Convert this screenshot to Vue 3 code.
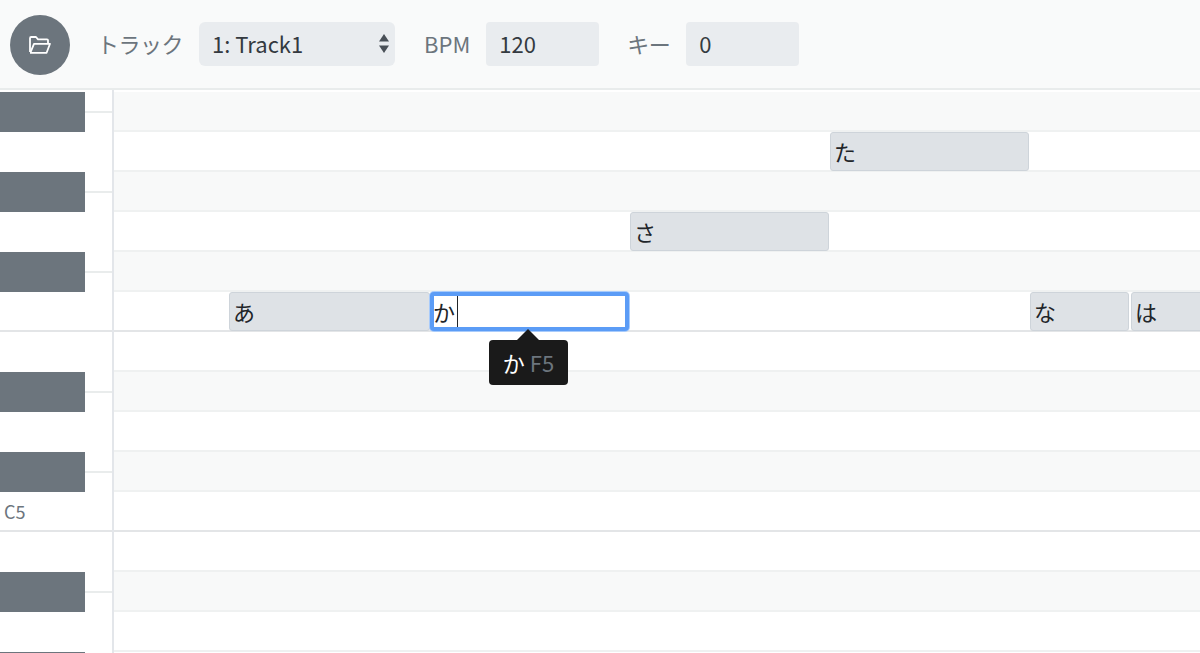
<script setup>
const rows = [1, 0, 1, 0, 1, 2, 0, 1, 0, 1, 2, 0, 1, 0]

const notes = [
  { text: 'た', row: 1, x: 716, w: 199 },
  { text: 'さ', row: 3, x: 516, w: 199 },
  { text: 'あ', row: 5, x: 115, w: 201 },
  { text: 'な', row: 5, x: 916, w: 99 },
  { text: 'は', row: 5, x: 1017, w: 100 },
]

const keys = [
  { h: 40, black: true },
  { h: 40 },
  { h: 40, black: true },
  { h: 40 },
  { h: 40, black: true },
  { h: 80, split: 40 },
  { h: 40, black: true },
  { h: 40 },
  { h: 40, black: true },
  { h: 80, split: 40, label: 'C5' },
  { h: 40, black: true },
  { h: 40 },
  { h: 40, black: true },
]

function noteStyle(note) {
  return {
    top: note.row * 40 + 2 + 'px',
    left: note.x + 'px',
    width: note.w + 'px',
  }
}
</script>

<template>
  <div class="app">
    <header class="toolbar">
      <button class="open-button" aria-label="open">
        <svg width="24" height="20" viewBox="0 0 24 20" fill="none" stroke="#fff" stroke-width="1.8" stroke-linejoin="round">
          <path d="M2 17V3.2C2 2.5 2.5 2 3.2 2H8L10 4.3H19C19.6 4.3 20 4.8 20 5.3V8.6" />
          <path d="M2 17.8H18.6L22 8.8H6L2.6 17.2" />
        </svg>
      </button>
      <label class="label track-label">トラック</label>
      <div class="select-wrap">
        <select class="field select">
          <option>1: Track1</option>
        </select>
        <svg class="select-arrows" width="10" height="19" viewBox="0 0 10 19" fill="#495057">
          <path d="M5 0L10 7.5H0Z" />
          <path d="M5 19L0 11.5H10Z" />
        </svg>
      </div>
      <label class="label bpm-label">BPM</label>
      <input class="field number" value="120" />
      <label class="label key-label">キー</label>
      <input class="field number" value="0" />
    </header>

    <main class="editor">
      <div class="piano">
        <div
          v-for="(key, i) in keys"
          :key="i"
          class="key"
          :class="{ black: key.black }"
          :style="{ height: key.h + 'px' }"
        >
          <template v-if="key.black">
            <div class="black-key"></div>
            <div class="key-line"></div>
          </template>
          <template v-else-if="key.split">
            <div class="white-top" :style="{ height: key.split + 'px' }">
              <span v-if="key.label" class="key-label-text">{{ key.label }}</span>
            </div>
          </template>
        </div>
      </div>

      <div class="grid">
        <div
          v-for="(row, i) in rows"
          :key="i"
          class="row"
          :class="{ shaded: row === 1, octave: row === 2 }"
        ></div>

        <div v-for="note in notes" :key="note.text" class="note" :style="noteStyle(note)">{{ note.text }}</div>

        <div class="note editing">
          <span class="caret">か</span>
        </div>

        <div class="tooltip">か <span class="shortcut">F5</span></div>
      </div>
    </main>
  </div>
</template>

<style>
html, body {
  margin: 0;
  overflow: hidden;
}
</style>

<style scoped>
.app {
  width: 1200px;
  height: 653px;
  overflow: hidden;
  background: #fff;
  font-family: "Noto Sans CJK JP", "Noto Sans", sans-serif;
  color: #212529;
}
.toolbar {
  height: 88px;
  box-sizing: content-box;
  border-bottom: 2px solid #e9ecec;
  background: #f9fafa;
  display: flex;
  align-items: center;
  padding-left: 10px;
}
.open-button {
  width: 60px;
  height: 60px;
  border: 0;
  padding: 0;
  border-radius: 50%;
  background: #6c757d;
  display: flex;
  align-items: center;
  justify-content: center;
  margin-right: 27px;
  margin-top: 2px;
}
.label {
  font-size: 22px;
  color: #6c757d;
  margin-top: -3px;
}
.track-label {
  letter-spacing: -0.5px;
}
.field {
  height: 44px;
  box-sizing: border-box;
  border: 0;
  outline: 0;
  border-radius: 4px;
  background: #e9ecef;
  color: #343a40;
  font-family: inherit;
  font-size: 22px;
}
.select-wrap {
  position: relative;
  margin-left: 16px;
  display: flex;
}
.select {
  width: 196px;
  padding: 0 0 2px 13px;
  border-radius: 6px;
  appearance: none;
}
.select-arrows {
  position: absolute;
  top: 12px;
  right: 6px;
}
.number {
  width: 113px;
  padding: 0 0 2px 13px;
}
.bpm-label {
  margin-left: 29px;
  margin-right: 16px;
}
.key-label {
  letter-spacing: -0.5px;
  margin-left: 28px;
  margin-right: 16px;
}
.editor {
  display: flex;
  height: 563px;
}
.piano {
  width: 114px;
  flex-shrink: 0;
  box-sizing: border-box;
  border-right: 2px solid #e3e6ea;
  padding-top: 2px;
  overflow: hidden;
}
.key {
  position: relative;
  display: flex;
  align-items: center;
}
.black-key {
  width: 85px;
  height: 100%;
  background: #6c757d;
}
.key-line {
  flex: 1;
  height: 2px;
  background: #e9ecec;
}
.white-top {
  width: 100%;
  align-self: flex-start;
  box-sizing: border-box;
  border-bottom: 2px solid #e3e5e7;
  position: relative;
}
.key-label-text {
  position: absolute;
  left: 4px;
  bottom: 9px;
  font-size: 18px;
  line-height: 20px;
  color: #6c757d;
}
.grid {
  position: relative;
  flex: 1;
  overflow: hidden;
  padding-top: 2px;
}
.row {
  height: 40px;
  box-sizing: border-box;
  border-bottom: 2px solid #eff1f1;
  background: #fff;
}
.row.shaded {
  background: #f8f9f9;
}
.row.octave {
  border-bottom-color: #e3e5e7;
}
.note {
  position: absolute;
  height: 39px;
  box-sizing: border-box;
  background: #dee2e6;
  border: 1px solid #ced4da;
  border-radius: 3px;
  padding-left: 3px;
  font-size: 22px;
  line-height: 36px;
  color: #212529;
}
.editing {
  top: 202px;
  left: 316px;
  width: 199px;
  height: 39px;
  background: #fff;
  border: 4px solid #5b9cf6;
  border-radius: 4px;
  box-shadow: 0 0 0 1px #a8cbfb;
  padding-left: 0;
  line-height: 31px;
}
.caret {
  display: inline-block;
  height: 31px;
  line-height: 31px;
  margin-left: -1px;
  padding-right: 2px;
  border-right: 1.5px solid #212529;
}
.tooltip {
  position: absolute;
  top: 250px;
  left: 375px;
  width: 79px;
  height: 45px;
  box-sizing: border-box;
  background: #1a1a1a;
  border-radius: 4px;
  color: #fff;
  font-size: 22px;
  line-height: 45px;
  text-align: center;
}
.tooltip::before {
  content: "";
  position: absolute;
  top: -11px;
  left: 28px;
  border-left: 11px solid transparent;
  border-right: 11px solid transparent;
  border-bottom: 11px solid #1a1a1a;
}
.shortcut {
  color: #6c757d;
}
</style>
